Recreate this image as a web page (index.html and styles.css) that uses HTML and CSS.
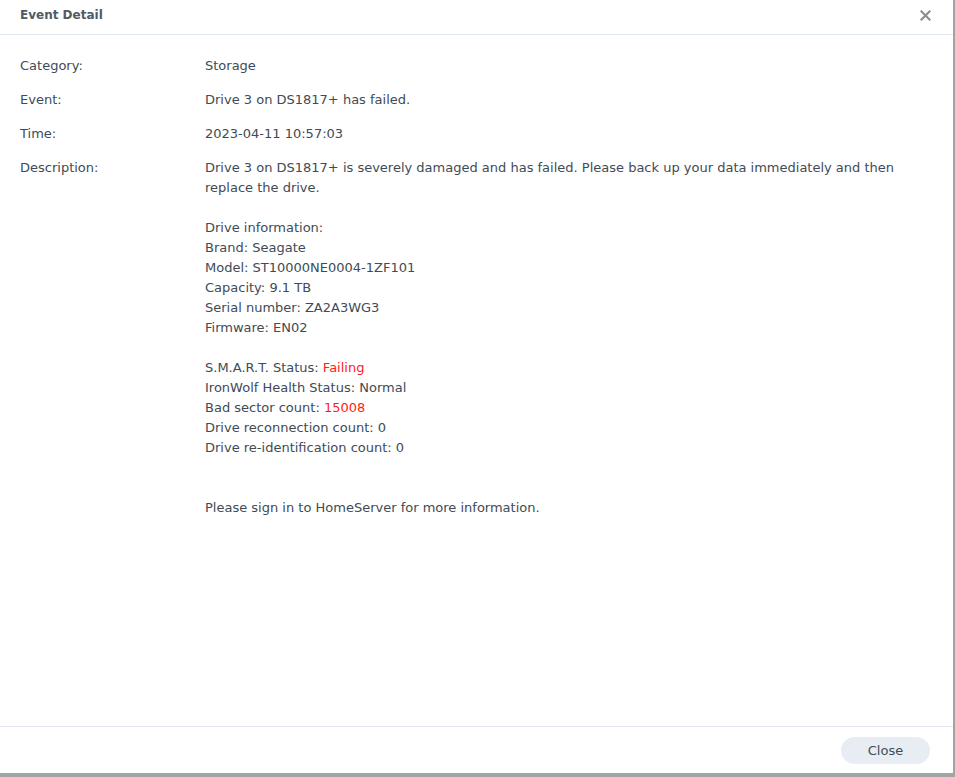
FILE: index.html
```html
<!DOCTYPE html>
<html>
<head>
  <title>Event Detail</title>
  <link rel="stylesheet" href="styles.css">
</head>
<body>

  <div class="dialog">
    <div class="header">
      <span class="title">Event Detail</span>
      <button class="close-x" aria-label="Close">
        <svg width="11" height="11" viewBox="0 0 11 11">
          <path d="M1.5 1.5 L9.5 9.5 M9.5 1.5 L1.5 9.5" stroke="#8a9098" stroke-width="2.2" stroke-linecap="square" fill="none"/>
        </svg>
      </button>
    </div>

    <div class="body">
      <div class="row">
        <div class="label">Category:</div>
        <div class="value">Storage</div>
      </div>
      <div class="row">
        <div class="label">Event:</div>
        <div class="value">Drive 3 on DS1817+ has failed.</div>
      </div>
      <div class="row">
        <div class="label">Time:</div>
        <div class="value">2023-04-11 10:57:03</div>
      </div>
      <div class="row">
        <div class="label">Description:</div>
        <div class="value">
          <p>Drive 3 on DS1817+ is severely damaged and has failed. Please back up your data immediately and then replace the drive.</p>
          <p>
            Drive information:<br>
            Brand: Seagate<br>
            Model: ST10000NE0004-1ZF101<br>
            Capacity: 9.1 TB<br>
            Serial number: ZA2A3WG3<br>
            Firmware: EN02
          </p>
          <p>
            S.M.A.R.T. Status: <span class="bad">Failing</span><br>
            IronWolf Health Status: Normal<br>
            Bad sector count: <span class="bad">15008</span><br>
            Drive reconnection count: 0<br>
            Drive re-identification count: 0
          </p>
          <p class="last">Please sign in to HomeServer for more information.</p>
        </div>
      </div>
    </div>

    <div class="footer">
      <button class="btn">Close</button>
    </div>
  </div>

</body>
</html>
```

FILE: styles.css
```css
html, body {
  margin: 0;
  height: 100%;
}

body {
  background: #a3a3a3;
  font-family: "DejaVu Sans", Verdana, sans-serif;
  font-size: 13px;
  color: #414b55;
}

.dialog {
  width: 953px;
  height: 773px;
  background: #fff;
  display: flex;
  flex-direction: column;
}

.header {
  height: 34px;
  border-bottom: 1px solid #e3e9f0;
  display: flex;
  align-items: center;
  justify-content: space-between;
  padding: 0 20px;
}

.title {
  font-weight: bold;
  font-size: 12px;
  color: #505a64;
  margin-top: -5px;
}

.close-x {
  border: none;
  background: none;
  padding: 0;
  margin-right: 2px;
  margin-top: -4px;
  width: 11px;
  height: 11px;
  cursor: pointer;
}

.close-x svg {
  display: block;
}

.body {
  flex: 1;
  padding: 21px 20px 0;
  display: flex;
  flex-direction: column;
  gap: 14px;
}

.row {
  display: flex;
  line-height: 20px;
}

.label {
  width: 185px;
  flex-shrink: 0;
}

.value {
  flex: 1;
  padding-right: 20px;
}

.value p {
  margin: 0 0 20px;
}

.value p.last {
  margin-top: 40px;
}

.bad {
  color: #ff1c1c;
}

.footer {
  height: 46px;
  border-top: 1px solid #e3e9f0;
  display: flex;
  align-items: center;
  justify-content: flex-end;
  padding: 0 23px 0 0;
}

.btn {
  width: 89px;
  height: 27px;
  border: none;
  border-radius: 14px;
  background: #e8edf3;
  color: #414b55;
  font-family: "DejaVu Sans", Verdana, sans-serif;
  font-size: 13px;
  cursor: pointer;
  margin-top: 1px;
}
```
